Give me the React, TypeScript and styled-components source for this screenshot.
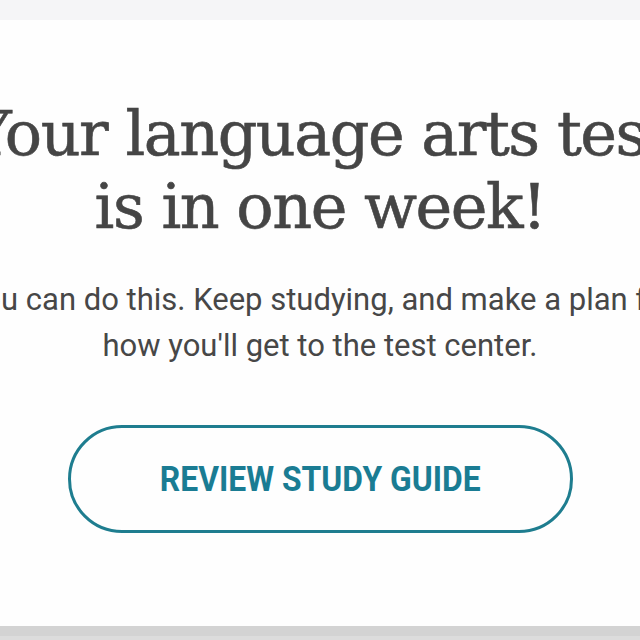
import { createGlobalStyle } from 'styled-components';
import styled from 'styled-components';

const GlobalStyle = createGlobalStyle`
  html, body {
    margin: 0;
    padding: 0;
    overflow: hidden;
    background: #fefefe;
  }
`;

const Page = styled.div`
  display: flex;
  flex-direction: column;
  width: 640px;
  height: 640px;
  overflow: hidden;
`;

const TopStrip = styled.div`
  height: 20px;
  flex-shrink: 0;
  background: #f5f5f7;
`;

const Card = styled.main`
  flex: 1;
  display: flex;
  flex-direction: column;
  align-items: center;
  background: #fefefe;
  padding-top: 77px;
`;

const Heading = styled.h1`
  margin: 0;
  font-family: 'DejaVu Serif', 'Liberation Serif', serif;
  font-weight: 400;
  font-size: 62px;
  line-height: 73px;
  letter-spacing: -1.5px;
  color: #454545;
  text-align: center;
  white-space: nowrap;
  -webkit-text-stroke: 0.6px #454545;
`;

const Lead = styled.p`
  margin: 34px 0 0;
  font-family: Roboto, 'Liberation Sans', sans-serif;
  font-weight: 400;
  font-size: 31px;
  line-height: 46px;
  color: #474747;
  text-align: center;
  white-space: nowrap;
`;

const OutlineButton = styled.button`
  margin-top: 56px;
  width: 505px;
  height: 108px;
  border: 3px solid #1e7d8f;
  border-radius: 54px;
  background: transparent;
  display: flex;
  align-items: center;
  justify-content: center;
  cursor: pointer;
`;

const ButtonLabel = styled.span`
  display: inline-block;
  font-family: Roboto, 'Liberation Sans', sans-serif;
  font-weight: 700;
  font-size: 35px;
  color: #1a7c93;
  transform: scaleX(0.91);
  white-space: nowrap;
`;

const BottomStrip = styled.div`
  height: 14px;
  flex-shrink: 0;
  background: #d3d3d3;
  border-bottom: 4px solid #dcdcdc;
  box-sizing: border-box;
`;

export default function App() {
  return (
    <>
      <GlobalStyle />
      <Page>
        <TopStrip />
        <Card>
          <Heading>
            Your language arts test
            <br />
            is in one week!
          </Heading>
          <Lead>
            You can do this. Keep studying, and make a plan for
            <br />
            how you'll get to the test center.
          </Lead>
          <OutlineButton>
            <ButtonLabel>REVIEW STUDY GUIDE</ButtonLabel>
          </OutlineButton>
        </Card>
        <BottomStrip />
      </Page>
    </>
  );
}
